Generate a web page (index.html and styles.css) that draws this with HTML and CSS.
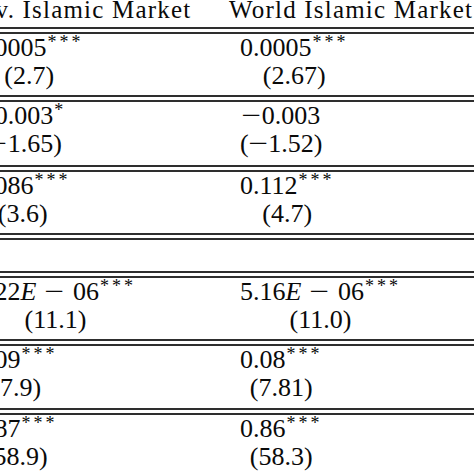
FILE: index.html
```html
<!DOCTYPE html>
<html>
<head>
<meta charset="utf-8">
<link rel="stylesheet" href="styles.css">
</head>
<body>
<div class="table">
  <div class="row hdr">
    <div class="cell">Dev. Islamic Market</div>
    <div class="cell">World Islamic Market</div>
  </div>
  <div class="rule"></div>
  <div class="row r1">
    <div class="cell val"><div class="stack"><span>0.0005<sup class="st">***</sup></span><span>(2.7)</span></div></div>
    <div class="cell val"><div class="stack"><span>0.0005<sup class="st">***</sup></span><span>(2.67)</span></div></div>
  </div>
  <div class="rule"></div>
  <div class="row r2">
    <div class="cell val"><div class="stack"><span><span class="neg">−</span>0.003<sup class="st">*</sup></span><span>(<span class="neg">−</span>1.65)</span></div></div>
    <div class="cell val"><div class="stack"><span><span class="neg">−</span>0.003</span><span>(<span class="neg">−</span>1.52)</span></div></div>
  </div>
  <div class="rule"></div>
  <div class="row r3">
    <div class="cell val"><div class="stack"><span>0.086<sup class="st">***</sup></span><span>(3.6)</span></div></div>
    <div class="cell val"><div class="stack"><span>0.112<sup class="st">***</sup></span><span>(4.7)</span></div></div>
  </div>
  <div class="rule"></div>
  <div class="row empty"></div>
  <div class="rule"></div>
  <div class="row r4">
    <div class="cell val"><div class="stack"><span>6.22<i>E</i><span class="bin">−</span>06<sup class="st">***</sup></span><span>(11.1)</span></div></div>
    <div class="cell val"><div class="stack"><span>5.16<i>E</i><span class="bin">−</span>06<sup class="st">***</sup></span><span>(11.0)</span></div></div>
  </div>
  <div class="rule"></div>
  <div class="row r5">
    <div class="cell val"><div class="stack"><span>0.09<sup class="st">***</sup></span><span>(7.9)</span></div></div>
    <div class="cell val"><div class="stack"><span>0.08<sup class="st">***</sup></span><span>(7.81)</span></div></div>
  </div>
  <div class="rule"></div>
  <div class="row r6">
    <div class="cell val"><div class="stack"><span>0.87<sup class="st">***</sup></span><span>(58.9)</span></div></div>
    <div class="cell val"><div class="stack"><span>0.86<sup class="st">***</sup></span><span>(58.3)</span></div></div>
  </div>
</div>
</body>
</html>
```

FILE: styles.css
```css
html, body {
  margin: 0;
  padding: 0;
  background: #fff;
}
body {
  width: 474px;
  height: 474px;
  overflow: hidden;
  font-family: "Liberation Serif", "Times New Roman", serif;
  font-size: 25px;
  color: #0a0a0a;
}
.table {
  margin-left: -36px;
  width: 580px;
}
.row {
  display: grid;
  grid-template-columns: 265px 1fr;
}
.cell {
  white-space: nowrap;
}
.hdr {
  height: 27px;
  line-height: 19px;
  letter-spacing: 1.2px;
}
.rule {
  height: 3px;
  border-top: 2px solid #2e2e2e;
  border-bottom: 2px solid #2e2e2e;
}
.r1 { height: 61px; }
.r2 { height: 63px; }
.r3 { height: 61px; }
.empty { height: 31px; }
.r4 { height: 61px; }
.r5 { height: 62px; }
.r6 { height: 70px; }
.val {
  padding-left: 11px;
}
.stack {
  display: inline-flex;
  flex-direction: column;
  align-items: center;
  font-size: 26px;
  line-height: 28px;
  margin-top: -2px;
}
.st {
  font-size: 18px;
  line-height: 0;
  vertical-align: 8px;
  letter-spacing: 3px;
  margin-left: 1px;
}
.neg {
  display: inline-block;
  transform: scaleX(1.35);
  margin: 0 3px 0 2px;
}
.bin {
  display: inline-block;
  transform: scaleX(1.35);
  margin: 0 11px;
}
```
